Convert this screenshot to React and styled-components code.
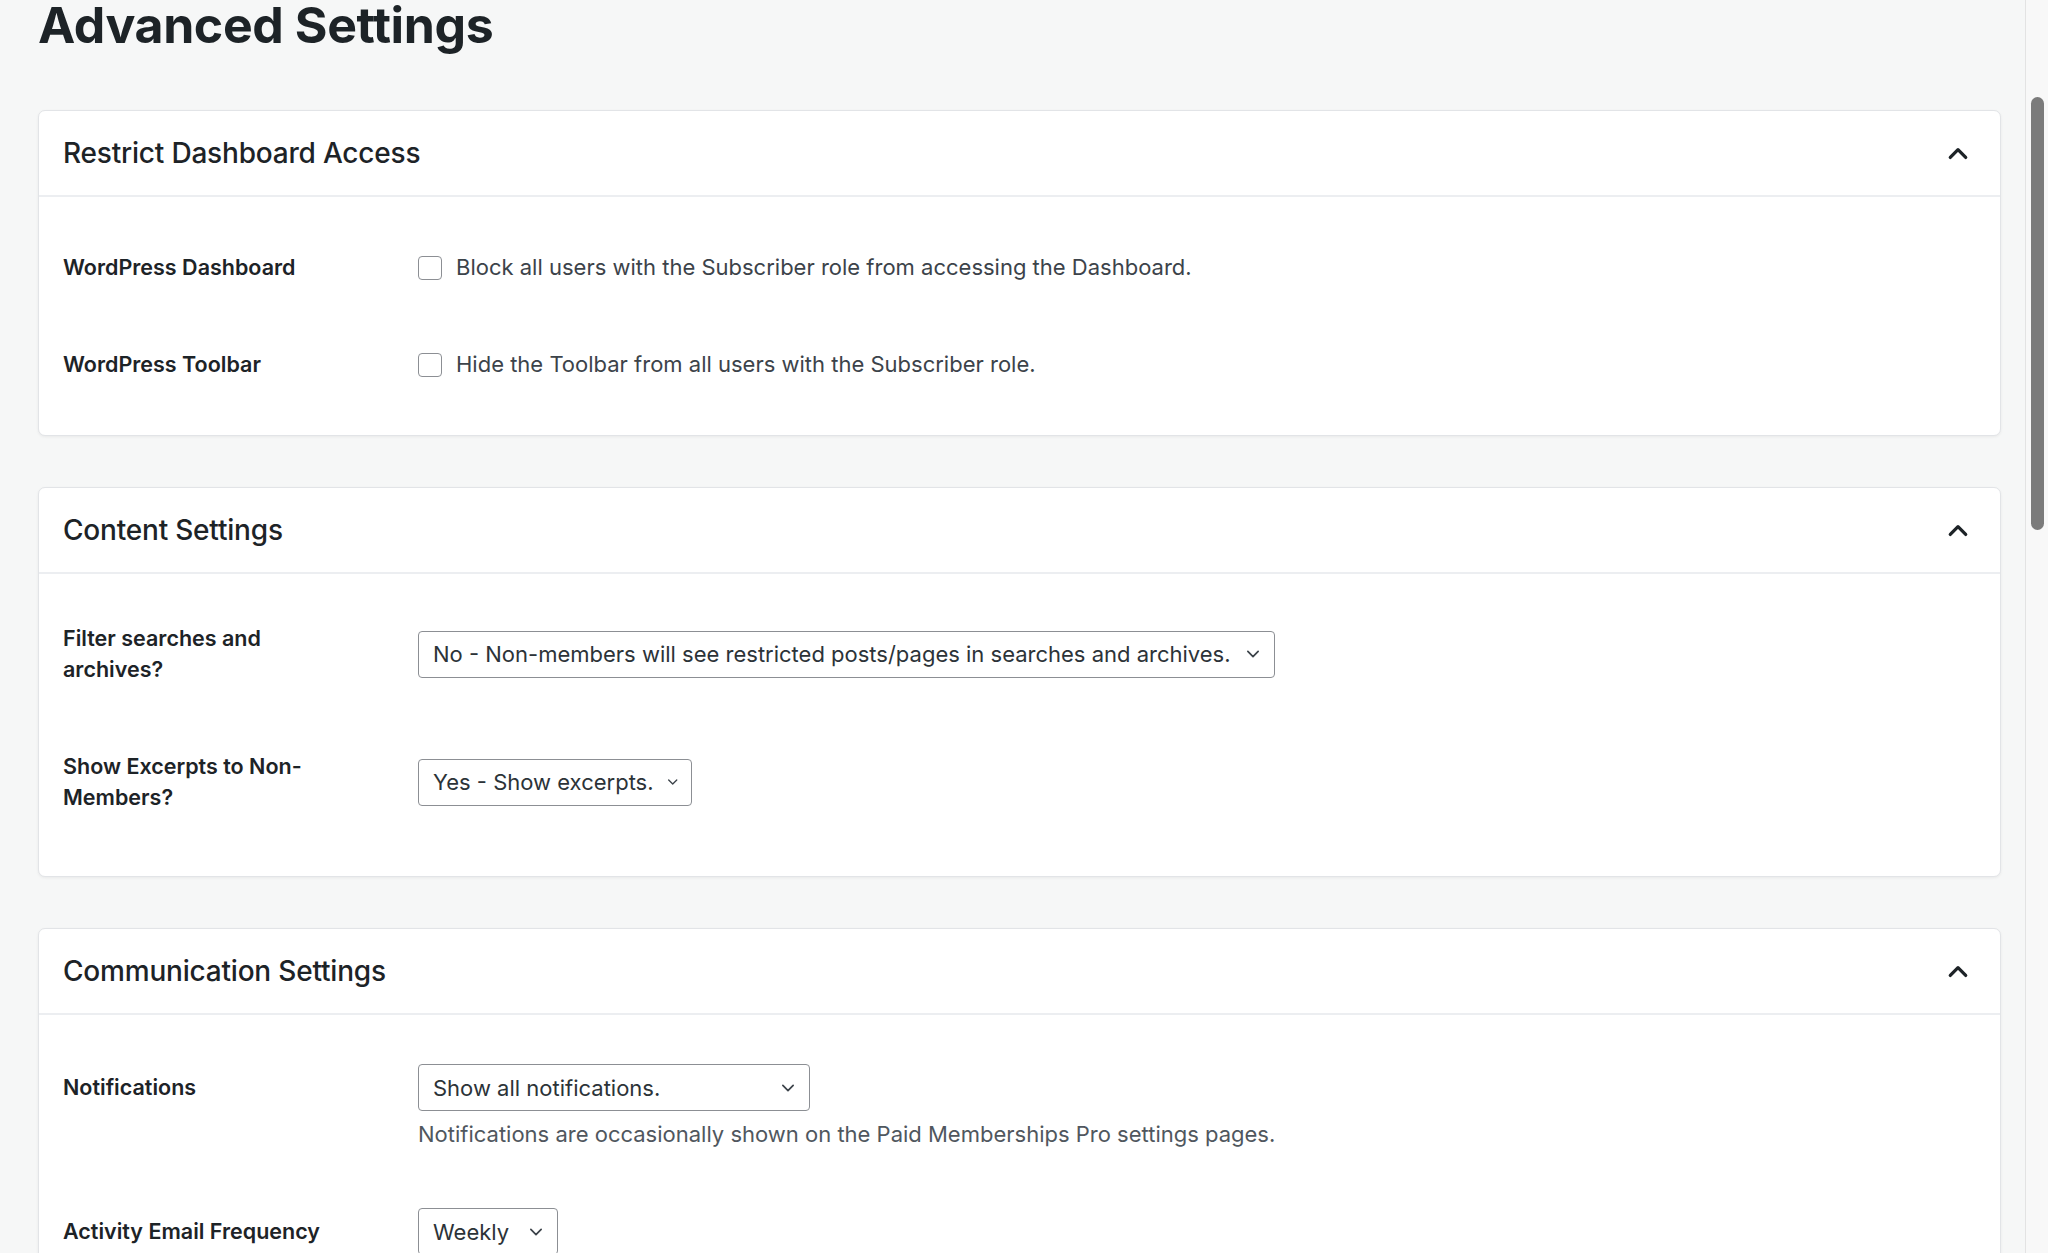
import React from "react";
import styled, { createGlobalStyle } from "styled-components";

const Global = createGlobalStyle`
  html, body { margin: 0; padding: 0; height: 100%; overflow: hidden; }
  body { background: #f6f7f7; font-family: Inter, "Noto Sans", "Liberation Sans", sans-serif; color: #1d2327; }
`;

const Shell = styled.div`display: flex; height: 100vh;`;
const Main = styled.main`flex: 1; overflow: hidden; padding: 0 24px 0 38px;`;
const Track = styled.div`
  width: 23px; border-left: 1px solid #e3e3e3; background: #f8f8f8;
  padding: 97px 4px 0 5px; box-sizing: border-box;
`;
const Thumb = styled.div`height: 433px; background: #7b7b7b; border-radius: 8px;`;

const Title = styled.h1`
  margin: -4px 0 0; font-size: 50px; line-height: 58px; font-weight: 700; letter-spacing: -0.4px; color: #1d2327;
`;
const Card = styled.section`
  margin-top: ${p => p.$top}px; background: #fff; border: 1px solid #e2e4e7; border-radius: 7px;
  box-shadow: 0 1px 3px rgba(0,0,0,0.06);
`;
const Header = styled.div`
  height: 84px; display: flex; align-items: center; justify-content: space-between;
  padding: 0 31px 0 24px; border-bottom: 2px solid #eceef1;
`;
const HeaderTitle = styled.h2`margin: 0; font-size: 28px; font-weight: 500; color: #1d2327; letter-spacing: -0.2px;`;
const Body = styled.div`padding: ${p => p.$pad};`;
const Row = styled.div`
  display: grid; grid-template-columns: 355px 1fr; align-items: ${p => p.$top ? "start" : "center"};
  padding: ${p => p.$py}px 24px;
`;
const Label = styled.div`
  font-size: 21.5px; font-weight: 600; line-height: 31px; color: #1d2327; max-width: 300px;
  margin-top: ${p => p.$mt || 0}px;
`;
const Field = styled.div`display: flex; flex-direction: column; align-items: flex-start;`;
const CheckLine = styled.label`display: flex; align-items: center; gap: 14px; font-size: 22px; color: #3c434a; line-height: 31px;`;
const Box = styled.span`
  width: 24px; height: 24px; box-sizing: border-box; border: 1.5px solid #8c8f94; border-radius: 4px; background: #fff;
`;
const Select = styled.div`
  height: 47px; box-sizing: border-box; border: 1.5px solid #8c8f94; border-radius: 4px; background: #fff;
  display: flex; align-items: center; justify-content: space-between; gap: 12px; white-space: nowrap;
  padding: 0 12px 0 14px; font-size: 22px; color: #2c3338;
  width: ${p => p.$w ? p.$w + "px" : "auto"};
`;
const Desc = styled.p`margin: 8px 0 0; font-size: 22px; line-height: 31px; color: #50575e;`;

const Chevron = ({ up, size = 14, w = 2 }) => (
  <svg width={size + 6} height={size} viewBox="0 0 20 14" fill="none" stroke={up ? "#1d2327" : "#3c434a"} strokeWidth={up ? 3 : w} strokeLinecap="round" strokeLinejoin="round">
    {up ? <path d="M3 11 L10 4 L17 11" /> : <path d="M4 4 L10 10 L16 4" />}
  </svg>
);

const Sel = ({ children, w }) => (
  <Select $w={w}><span>{children}</span><Chevron size={12} /></Select>
);

const Panel = ({ title, top, pad, children }) => (
  <Card $top={top}>
    <Header><HeaderTitle>{title}</HeaderTitle><Chevron up size={16} /></Header>
    <Body $pad={pad}>{children}</Body>
  </Card>
);

export default function App() {
  return (
    <Shell>
      <Global />
      <Main>
        <Title>Advanced Settings</Title>
        <Panel title="Restrict Dashboard Access" top={56} pad="22px 0 22px">
          <Row $py={33}><Label>WordPress Dashboard</Label>
            <Field><CheckLine><Box />Block all users with the Subscriber role from accessing the Dashboard.</CheckLine></Field></Row>
          <Row $py={33}><Label>WordPress Toolbar</Label>
            <Field><CheckLine><Box />Hide the Toolbar from all users with the Subscriber role.</CheckLine></Field></Row>
        </Panel>
        <Panel title="Content Settings" top={51} pad="16px 0 30px">
          <Row $py={33}><Label>Filter searches and archives?</Label>
            <Field><Sel w={857}>No - Non-members will see restricted posts/pages in searches and archives.</Sel></Field></Row>
          <Row $py={33}><Label>Show Excerpts to Non-Members?</Label>
            <Field><Sel w={274}>Yes - Show excerpts.</Sel></Field></Row>
        </Panel>
        <Panel title="Communication Settings" top={51} pad="16px 0 20px">
          <Row $py={33} $top><Label $mt={8}>Notifications</Label>
            <Field><Sel w={392}>Show all notifications.</Sel>
              <Desc>Notifications are occasionally shown on the Paid Memberships Pro settings pages.</Desc></Field></Row>
          <Row $py={25} $top><Label $mt={8}>Activity Email Frequency</Label>
            <Field><Sel w={140}>Weekly</Sel>
              <Desc>Send periodic sales and revenue updates from this site to the administration email address.</Desc></Field></Row>
        </Panel>
      </Main>
      <Track><Thumb /></Track>
    </Shell>
  );
}
